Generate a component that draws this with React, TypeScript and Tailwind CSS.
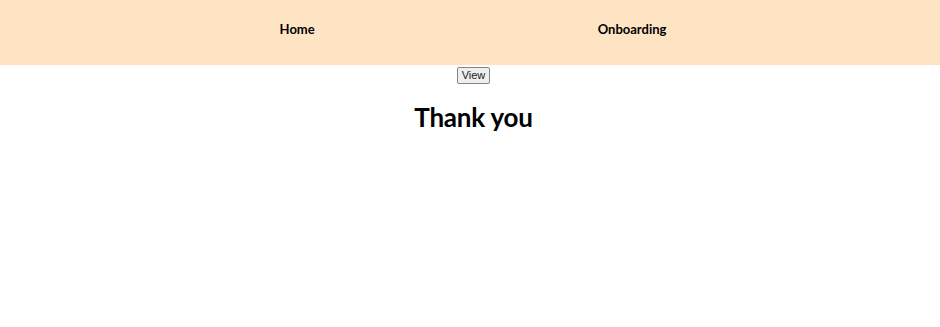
import React from 'react';

const links = ['Home', 'Onboarding'];

export default function App() {
  return (
    <div className="min-h-[327px] bg-white font-['Lato',sans-serif] text-black">
      <header className="flex h-[65px] items-center justify-center gap-[283px] bg-[#ffe4c4] pb-[6px] pl-[6px]">
        {links.map(link => (
          <a key={link} className="cursor-pointer text-[13px] font-bold">
            {link}
          </a>
        ))}
      </header>
      <div className="flex flex-col items-center pl-[7px]">
        <button className="mt-[2px] rounded-[2px] border border-[#858585] bg-[#efefef] px-[3.5px] font-['Liberation_Sans',sans-serif] text-[11px] leading-[15px] text-[#1a1a1a]">
          View
        </button>
        <h1 className="mt-[16px] text-[26px] font-bold leading-[34px] tracking-[-0.2px]">Thank you</h1>
      </div>
    </div>
  );
}
